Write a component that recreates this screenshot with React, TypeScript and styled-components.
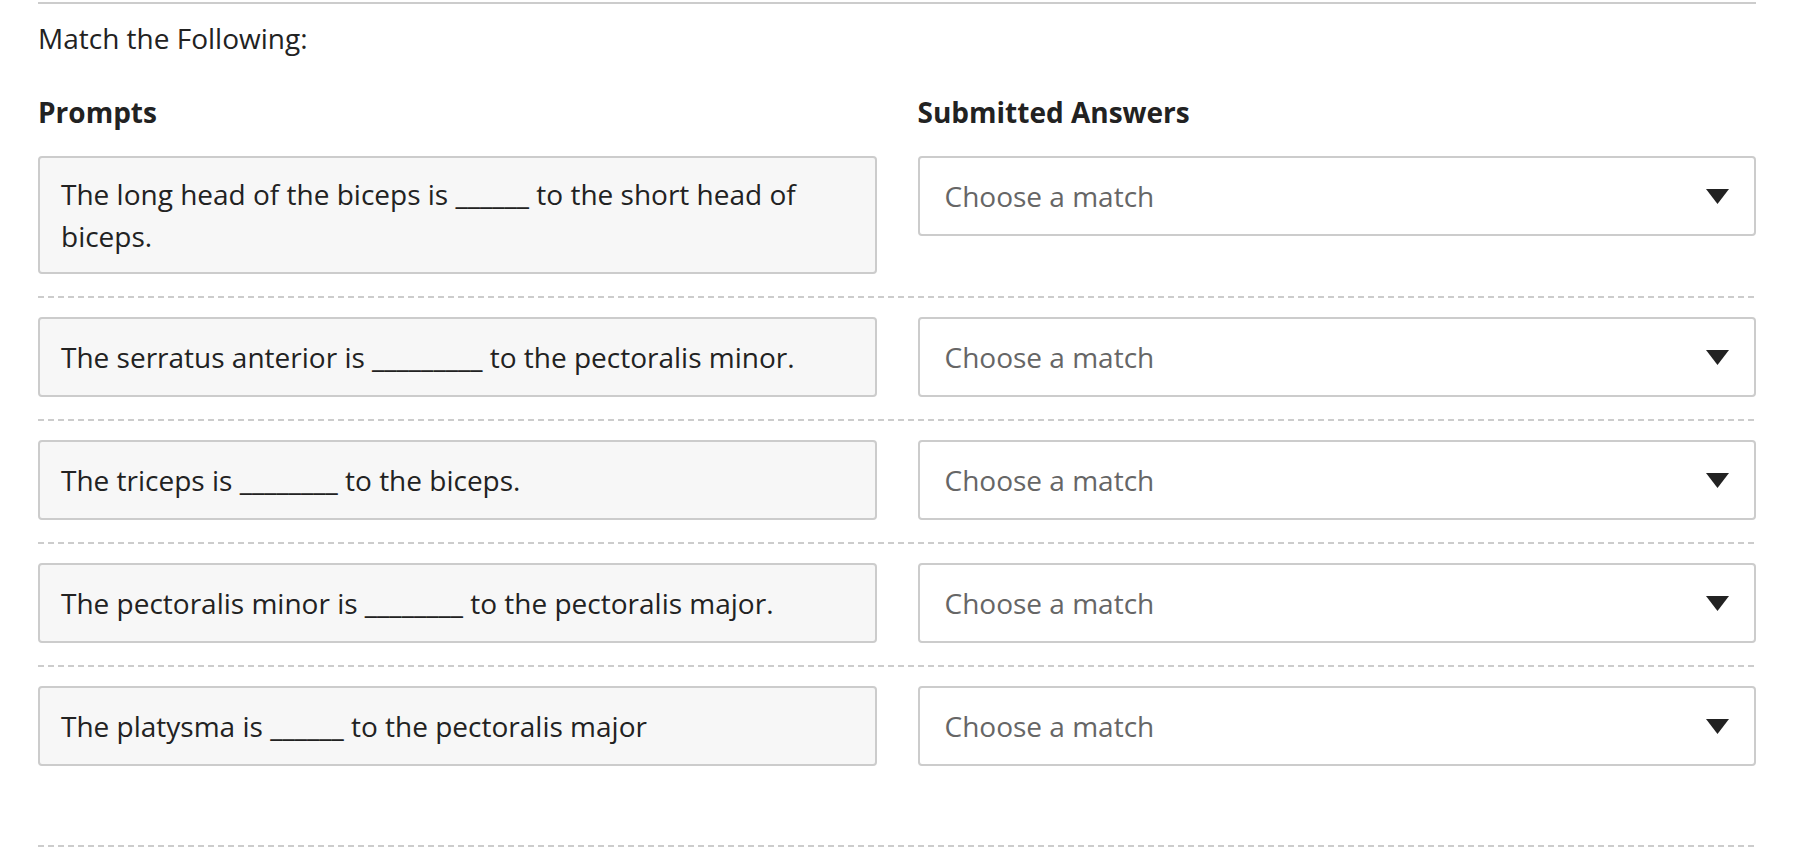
import React from "react";
import styled, { createGlobalStyle } from "styled-components";

const GlobalStyle = createGlobalStyle`
    html, body {
        margin: 0;
        padding: 0;
        background: #ffffff;
    }
    body {
        font-family: "Open Sans", "Liberation Sans", sans-serif;
        color: #222222;
    }
    * {
        box-sizing: border-box;
    }
`;

const Page = styled.div`
    width: 1718px;
    margin-left: 38px;
    padding-top: 2px;
`;

const TopRule = styled.div`
    height: 2px;
    background: #cccccc;
`;

const Instruction = styled.p`
    margin: 13px 0 0;
    font-size: 28px;
    line-height: 42px;
`;

const Columns = styled.div`
    display: grid;
    grid-template-columns: 1fr 1fr;
    column-gap: 41px;
`;

const Header = styled(Columns)`
    margin-top: 32px;
    margin-bottom: 23px;
`;

const ColumnTitle = styled.h3`
    margin: 0;
    font-size: 28px;
    line-height: 42px;
    font-weight: 700;
    color: #222222;
`;

// dashed separator drawn along the bottom of each row
const Row = styled(Columns)<{ $first?: boolean; $last?: boolean }>`
    align-items: start;
    padding-top: ${(p) => (p.$first ? "0" : "19px")};
    padding-bottom: ${(p) => (p.$last ? "81px" : "24px")};
    background-image: repeating-linear-gradient(
        to right,
        #cccccc 0,
        #cccccc 6px,
        transparent 6px,
        transparent 10px
    );
    background-size: 100% 2px;
    background-repeat: no-repeat;
    background-position: left bottom;
`;

const Prompt = styled.div`
    min-height: 80px;
    display: flex;
    align-items: center;
    padding: 15px 21px;
    background: #f7f7f7;
    border: 2px solid #cccccc;
    border-radius: 4px;
    font-size: 28px;
    line-height: 42px;
    color: #222222;
`;

const Select = styled.div`
    height: 80px;
    display: flex;
    align-items: center;
    justify-content: space-between;
    padding: 0 25px 0 25px;
    background: #ffffff;
    border: 2px solid #cccccc;
    border-radius: 4px;
    font-size: 28px;
    line-height: 42px;
    color: #666666;
    cursor: pointer;
`;

const Caret = () => (
    <svg width="23" height="15" viewBox="0 0 23 15">
        <polygon points="0,0 23,0 11.5,15" fill="#222222" />
    </svg>
);

const prompts = [
    "The long head of the biceps is ______ to the short head of biceps.",
    "The serratus anterior is _________ to the pectoralis minor.",
    "The triceps is ________ to the biceps.",
    "The pectoralis minor is ________ to the pectoralis major.",
    "The platysma is ______ to the pectoralis major",
];

const App = () => {
    return (
        <>
            <GlobalStyle />
            <Page>
                <TopRule />
                <Instruction>Match the Following:</Instruction>
                <Header>
                    <ColumnTitle>Prompts</ColumnTitle>
                    <ColumnTitle>Submitted Answers</ColumnTitle>
                </Header>
                {prompts.map((text, i) => (
                    <Row key={i} $first={i === 0} $last={i === prompts.length - 1}>
                        <Prompt>{text}</Prompt>
                        <Select>
                            <span>Choose a match</span>
                            <Caret />
                        </Select>
                    </Row>
                ))}
            </Page>
        </>
    );
};

export default App;
